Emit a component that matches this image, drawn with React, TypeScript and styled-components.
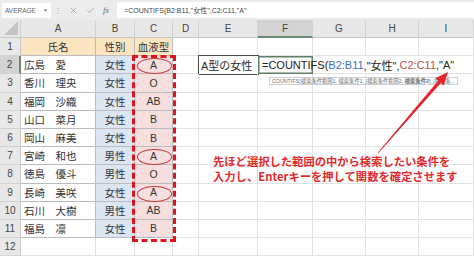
import React from "react";
import styled, { createGlobalStyle } from "styled-components";
import { X, Check } from "lucide-react";

const GlobalStyle = createGlobalStyle`
  html, body { margin: 0; padding: 0; background: #ffffff; }
  body { font-family: "Liberation Sans", "Noto Sans CJK JP", sans-serif; }
`;

const COLS = [21, 75, 39, 38, 26, 59, 55, 53, 53, 55];
const LETTERS = ["A", "B", "C", "D", "E", "F", "G", "H", "I"];
const ROW_H = 18.2;
const TABLE_BORDER = "#bcbcbc";
const GRID = "#e2e2e2";

type Tone = "plain" | "yellow" | "name" | "blue" | "pink";
const TONE_BG: Record<Tone, string> = {
  plain: "transparent",
  yellow: "#fce6c2",
  name: "#ffffff",
  blue: "#dce6f3",
  pink: "#f7dfe0",
};

const Page = styled.div`
  width: 474px;
  height: 258px;
  overflow: hidden;
  display: flex;
  flex-direction: column;
  background: #fff;
`;

const FormulaBar = styled.div`
  flex: none;
  height: 20px;
  box-sizing: border-box;
  display: flex;
  align-items: center;
  padding-left: 2px;
  background: #ececec;
`;

const NameBox = styled.div`
  width: 49px;
  height: 15px;
  box-sizing: border-box;
  display: flex;
  align-items: center;
  justify-content: space-between;
  padding: 0 3px;
  background: #fff;
  font-size: 6.5px;
  color: #666;
`;

const Caret = styled.span`
  font-size: 5px;
  color: #888;
`;

const Grip = styled.span`
  width: 14px;
  text-align: center;
  font-size: 8px;
  color: #a8a8a8;
`;

const BarTools = styled.div`
  height: 15px;
  display: flex;
  align-items: center;
  gap: 8px;
  padding: 0 8px 0 4px;
  color: #7a7a7a;
`;

const FxMark = styled.span`
  font-family: "Liberation Serif", serif;
  font-style: italic;
  font-size: 8.5px;
  color: #666;
`;

const FormulaInput = styled.div`
  flex: 1;
  height: 16px;
  display: flex;
  align-items: center;
  padding-left: 7px;
  background: #fff;
  font-size: 7px;
  color: #444;
  white-space: nowrap;
  overflow: hidden;
`;

const Sheet = styled.div`
  flex: none;
  display: grid;
  grid-template-columns: ${COLS.map((w) => `${w}px`).join(" ")};
  grid-template-rows: 18px repeat(12, ${ROW_H}px);
  background: #fff;
`;

const Corner = styled.div`
  grid-row: 1;
  grid-column: 1;
  display: flex;
  align-items: flex-end;
  justify-content: flex-end;
  padding: 0 2px 2px 0;
  background: #e8e8e8;
  border-right: 1px solid #cccccc;
  border-bottom: 1px solid #c6c6c6;
`;

const ColHead = styled.div<{ $c: number; $active?: boolean }>`
  grid-row: 1;
  grid-column: ${(p) => p.$c};
  box-sizing: border-box;
  display: flex;
  align-items: center;
  justify-content: center;
  font-size: 10px;
  color: #454545;
  background: ${(p) => (p.$active ? "#d3d3d3" : "#e8e8e8")};
  border-right: 1px solid #d2d2d2;
  border-bottom: ${(p) => (p.$active ? "2px solid #6b8b72" : "1px solid #c6c6c6")};
`;

const RowHead = styled.div<{ $r: number; $active?: boolean }>`
  grid-row: ${(p) => p.$r};
  grid-column: 1;
  box-sizing: border-box;
  display: flex;
  align-items: center;
  justify-content: center;
  font-size: 10px;
  color: #454545;
  background: ${(p) => (p.$active ? "#d3d3d3" : "#e8e8e8")};
  border-right: ${(p) => (p.$active ? "2px solid #6b8b72" : "1px solid #c6c6c6")};
  border-bottom: 1px solid #d2d2d2;
`;

const Cell = styled.div<{
  $r: number;
  $c: number;
  $tone?: Tone;
  $center?: boolean;
  $noRight?: boolean;
}>`
  grid-row: ${(p) => p.$r};
  grid-column: ${(p) => p.$c};
  box-sizing: border-box;
  min-width: 0;
  display: flex;
  align-items: center;
  justify-content: ${(p) => (p.$center ? "center" : "flex-start")};
  padding: 0 3px;
  font-size: 10.5px;
  color: #333;
  white-space: nowrap;
  background: ${(p) => TONE_BG[p.$tone ?? "plain"]};
  border-right: 1px solid
    ${(p) =>
      p.$noRight ? "transparent" : p.$tone && p.$tone !== "plain" ? TABLE_BORDER : GRID};
  border-bottom: 1px solid
    ${(p) => (p.$tone && p.$tone !== "plain" ? TABLE_BORDER : GRID)};
`;

const BloodCell = styled(Cell)<{ $circled?: boolean }>`
  position: relative;
  &::after {
    content: "";
    display: ${(p) => (p.$circled ? "block" : "none")};
    position: absolute;
    left: 2px;
    right: 0;
    top: 2px;
    bottom: -1px;
    border: 1.3px solid #c43a3e;
    border-radius: 50%;
  }
`;

const LabelCell = styled(Cell)`
  border: none;
  box-shadow: 0 0 0 1px #4a4a4a;
  font-size: 11px;
  padding-left: 2px;
  color: #2a2a2a;
`;

const ActiveCell = styled(Cell)`
  position: relative;
  z-index: 3;
  border: none;
  box-shadow: inset 0 0 0 1.5px #5f7f67;
  padding-left: 4px;
  overflow: visible;
  font-size: 11px;
  color: #222;
`;

const RefB = styled.span`
  color: #3d6fbf;
`;
const RefC = styled.span`
  color: #c0504d;
`;
const TextCursor = styled.span`
  display: inline-block;
  width: 1px;
  height: 11px;
  margin-left: 1px;
  background: #111;
  vertical-align: middle;
`;

const DashedFrame = styled.div`
  grid-row: 3 / 13;
  grid-column: 4;
  margin: -1.5px -3px -4px -3px;
  border: 3px dashed #e0141c;
  z-index: 4;
  pointer-events: none;
`;

const Tooltip = styled.div`
  grid-row: 4;
  grid-column: 7 / 11;
  align-self: start;
  justify-self: start;
  margin: 2.6px 0 0 11px;
  height: 8px;
  box-sizing: border-box;
  z-index: 5;
  padding: 0 2px;
  background: #fff;
  border: 1px solid #d0d0d0;
  font-size: 5.3px;
  line-height: 6px;
  color: #6a6a6a;
  white-space: nowrap;
`;

const Callout = styled.div`
  grid-row: 8 / 11;
  grid-column: 6 / 11;
  z-index: 6;
  padding: 7px 0 0 14px;
  font-family: "Noto Sans CJK JP", sans-serif;
  font-weight: 700;
  font-size: 11.3px;
  line-height: 15px;
  color: #e32a2c;
  white-space: nowrap;
  pointer-events: none;
`;

const ArrowLayer = styled.svg`
  grid-row: 1 / -1;
  grid-column: 1 / -1;
  z-index: 7;
  width: 474px;
  height: 238px;
  pointer-events: none;
`;

const CornerMark = () => (
  <svg width="14" height="14" viewBox="0 0 14 14">
    <polygon points="14,0 14,14 0,14" fill="#c3c3c3" />
  </svg>
);

const PEOPLE: [string, string, string, string, boolean][] = [
  ["広島", "愛", "女性", "A", true],
  ["香川", "理央", "女性", "O", false],
  ["福岡", "沙織", "女性", "AB", false],
  ["山口", "菜月", "女性", "B", false],
  ["岡山", "麻美", "女性", "B", false],
  ["宮崎", "和也", "男性", "A", true],
  ["徳島", "優斗", "男性", "O", false],
  ["長崎", "美咲", "女性", "A", true],
  ["石川", "大樹", "男性", "AB", false],
  ["福島", "凛", "女性", "B", false],
];

export default function App() {
  const cells: React.ReactNode[] = [];

  cells.push(
    <Cell key="a1" $r={2} $c={2} $tone="yellow" $center>氏名</Cell>,
    <Cell key="b1" $r={2} $c={3} $tone="yellow" $center>性別</Cell>,
    <Cell key="c1" $r={2} $c={4} $tone="yellow" $center>血液型</Cell>
  );
  for (let c = 5; c <= 10; c++) cells.push(<Cell key={`r1-${c}`} $r={2} $c={c} />);

  PEOPLE.forEach(([sur, given, sex, blood, circled], i) => {
    const r = i + 3;
    cells.push(
      <Cell key={`a${r}`} $r={r} $c={2} $tone="name">{`${sur}　${given}`}</Cell>,
      <Cell key={`b${r}`} $r={r} $c={3} $tone="blue" $center>{sex}</Cell>,
      <BloodCell key={`c${r}`} $r={r} $c={4} $tone="pink" $center $circled={circled}>
        {blood}
      </BloodCell>,
      <Cell key={`d${r}`} $r={r} $c={5} />
    );
    if (r === 3) {
      cells.push(
        <LabelCell key="e2" $r={3} $c={6}>A型の女性</LabelCell>,
        <ActiveCell key="f2" $r={3} $c={7}>
          =COUNTIFS(<RefB>B2:B11</RefB>,"女性",<RefC>C2:C11</RefC>,"A"
          <TextCursor />
        </ActiveCell>,
        <Cell key="g2" $r={3} $c={8} $noRight />,
        <Cell key="h2" $r={3} $c={9} $noRight />,
        <Cell key="i2" $r={3} $c={10} />
      );
    } else {
      for (let c = 6; c <= 10; c++) cells.push(<Cell key={`r${r}-${c}`} $r={r} $c={c} />);
    }
  });
  for (let c = 2; c <= 10; c++) cells.push(<Cell key={`r12-${c}`} $r={13} $c={c} />);

  return (
    <>
      <GlobalStyle />
      <Page>
        <FormulaBar>
          <NameBox>
            AVERAGE<Caret>▼</Caret>
          </NameBox>
          <Grip>⋮</Grip>
          <BarTools>
            <X size={9} strokeWidth={1.4} />
            <Check size={9} strokeWidth={1.4} />
            <FxMark>fx</FxMark>
          </BarTools>
          <FormulaInput>=COUNTIFS(B2:B11,"女性",C2:C11,"A"</FormulaInput>
        </FormulaBar>
        <Sheet>
          <Corner>
            <CornerMark />
          </Corner>
          {LETTERS.map((l, i) => (
            <ColHead key={l} $c={i + 2} $active={l === "F"}>
              {l}
            </ColHead>
          ))}
          {Array.from({ length: 12 }, (_, i) => (
            <RowHead key={i} $r={i + 2} $active={i === 1}>
              {i + 1}
            </RowHead>
          ))}
          {cells}
          <DashedFrame />
          <Tooltip>
            COUNTIFS(検索条件範囲1, 検索条件1, [検索条件範囲2, <b>検索条件2</b>], [検索条...
          </Tooltip>
          <Callout>
            先ほど選択した範囲の中から検索したい条件を
            <br />
            入力し、Enterキーを押して関数を確定させます
          </Callout>
          <ArrowLayer viewBox="0 0 474 238">
            <polygon
              points="377.7,132.74 438.14,60.66 435.34,58.24 448,52 443.66,65.44 440.86,63.02 378.3,133.26"
              fill="#e3262b"
            />
          </ArrowLayer>
        </Sheet>
      </Page>
    </>
  );
}
